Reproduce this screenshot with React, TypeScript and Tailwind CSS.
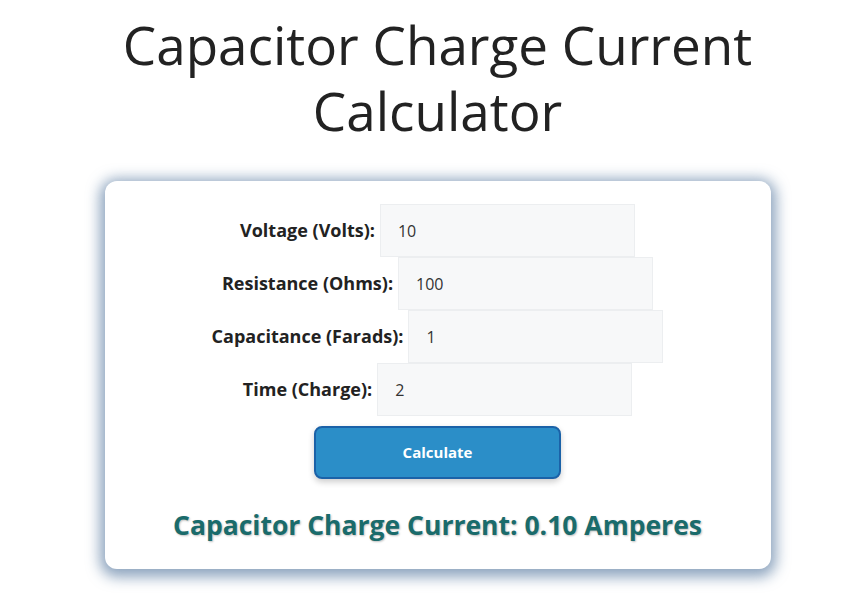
import React from "react";

const rows = [
  { label: "Voltage (Volts):", value: "10" },
  { label: "Resistance (Ohms):", value: "100" },
  { label: "Capacitance (Farads):", value: "1" },
  { label: "Time (Charge):", value: "2" },
];

export default function App() {
  return (
    <div className="min-h-[601px] w-full bg-white pl-[20px] font-['Open_Sans',sans-serif] text-[#222]">
      <h1 className="mx-auto w-[720px] pt-[12px] text-center text-[53px] font-normal leading-[66px] text-[#222]">
        Capacitor Charge Current Calculator
      </h1>
      <div className="mx-auto mt-[37px] w-[666px] rounded-[12px] bg-white px-6 pt-[23px] pb-[26px] shadow-[0_3px_14px_5px_rgba(80,115,155,0.65)]">
        <div className="flex flex-col items-center">
          {rows.map((r) => (
            <div key={r.label} className="flex items-center gap-[5px]">
              <label className="text-[18px] font-bold text-[#222]">{r.label}</label>
              <input
                readOnly
                value={r.value}
                className="h-[53px] w-[255px] border border-[#eceef0] bg-[#f7f8f9] px-[17px] text-[16px] text-[#333] outline-none"
              />
            </div>
          ))}
          <button className="mt-[10px] h-[53px] w-[247px] rounded-[8px] border-2 border-[#1b62a8] bg-[#2b8ec8] text-[15px] font-bold text-white shadow-[0_3px_6px_rgba(0,0,0,0.2)]">
            Calculate
          </button>
          <div className="mt-[28px] text-[26.5px] font-bold leading-[36px] text-[#1a6b6b] [text-shadow:1px_1px_2px_rgba(0,0,0,0.25)]">
            Capacitor Charge Current: 0.10 Amperes
          </div>
        </div>
      </div>
    </div>
  );
}
